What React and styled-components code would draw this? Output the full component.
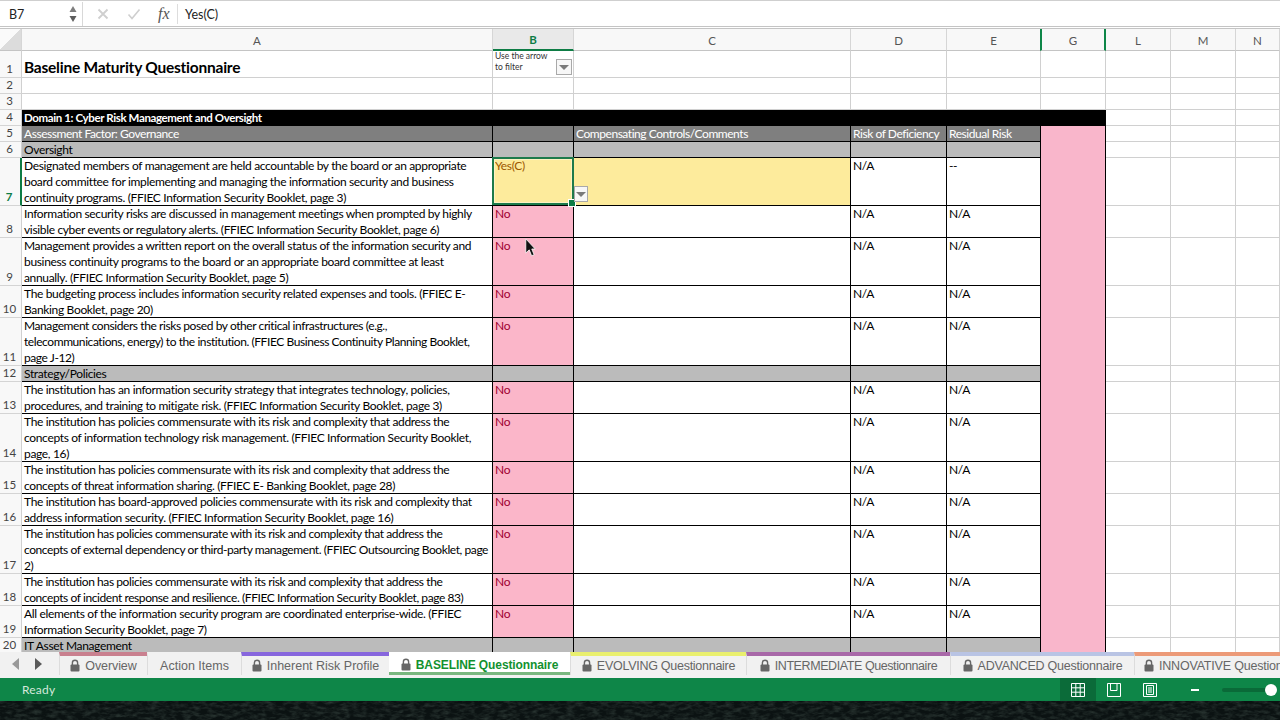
import React from 'react'
import styled, { createGlobalStyle } from 'styled-components'

const GlobalStyle = createGlobalStyle`
  html, body { margin: 0; padding: 0; background: #fff; }
  body { width: 1280px; height: 720px; overflow: hidden; font-family: Lato, "Liberation Sans", sans-serif; }
`
const Page = styled.div`
  width: 1280px;
  height: 720px;
  display: flex;
  flex-direction: column;
  overflow: hidden;
`
const FormulaBar = styled.div`
  height: 25px;
  flex: none;
  display: flex;
  align-items: center;
  border-top: 1px solid #cfcfcf;
  border-bottom: 3px double #c4c4c4;
  background: #fff;
  color: #222;
  font-size: 12.5px;
`
const NameBox = styled.div`
  width: 83px;
  height: 24px;
  box-sizing: border-box;
  padding: 1px 5px 0 9px;
  flex: none;
  display: flex;
  align-items: center;
  justify-content: space-between;
  border-right: 1px solid #d8d8d8;
`
const FormulaIcons = styled.div`
  width: 95px;
  height: 20px;
  flex: none;
  display: flex;
  align-items: center;
  padding-left: 14px;
  gap: 18px;
  box-sizing: border-box;
  border-right: 1px solid #ddd;
`
const Fx = styled.span`
  font-family: "Liberation Serif", serif;
  font-style: italic;
  font-size: 16px;
  color: #555;
  margin-left: -1px;
`
const FormulaText = styled.div`
  margin: 2px 0 0 7px;
`
const Sheet = styled.div`
  height: 623px;
  flex: none;
  display: grid;
  grid-template-columns: 22px 471px 81px 277px 96px 94px 65px 65px 65px 44px;
  grid-template-rows: 22px 27px 16px 16px 16px 16px 16px 48px 32px 48px 32px 48px 16px 32px 48px 32px 32px 48px 32px 32px 16px;
  overflow: hidden;
  background: #fff;
  font-size: 12px;
  line-height: 16px;
  letter-spacing: -0.34px;
  color: #000;
`
const Corner = styled.div`
  background: linear-gradient(135deg, #fafafa 50%, #dcdcdc 50%);
  border-right: 1px solid #d6d6d6;
  border-bottom: 1px solid #c4c4c4;
`
const ColHead = styled.div`
  display: flex;
  align-items: center;
  justify-content: center;
  box-sizing: border-box;
  padding-top: 2px;
  letter-spacing: 0;
  font-size: 11.5px;
  color: ${p => (p.$active ? '#0e7c45' : '#555')};
  font-weight: ${p => (p.$active ? 700 : 400)};
  background: ${p => (p.$active ? '#e9e9e9' : '#f8f8f8')};
  border-right: 1px solid #d6d6d6;
  border-bottom: ${p => (p.$active ? '2px solid #0e7c45' : '1px solid #c4c4c4')};
  ${p => p.$marked && 'border-left: 2px solid #0e8648; border-right: 2px solid #0e8648; margin-left: -1px;'}
`
const RowHead = styled.div`
  display: flex;
  align-items: flex-end;
  justify-content: center;
  box-sizing: border-box;
  padding-right: 2px;
  background: #f8f8f8;
  border-right: ${p => (p.$active ? '2px solid #0e7c45' : '1px solid #d0d0d0')};
  border-bottom: 1px solid #d4d4d4;
  font-size: 11.5px;
  letter-spacing: 0;
  color: ${p => (p.$active ? '#0e7c45' : '#444')};
  font-weight: ${p => (p.$active ? 700 : 400)};
`
const cellFills = {
  dark: '#7f7f7f',
  grey: '#bbbbbb',
  yellow: '#fdeb9c',
  pink: '#fbb6c9',
  white: '#fff',
}
const Cell = styled.div`
  position: relative;
  box-sizing: border-box;
  padding-left: 2px;
  white-space: pre;
  background: ${p => cellFills[p.$fill || 'white']};
  color: ${p => p.$color || '#000'};
  border-right: 1px solid ${p => (p.$lined ? '#000' : '#d0d0d0')};
  border-bottom: 1px solid ${p => (p.$lined ? '#000' : '#d0d0d0')};
  ${p => p.$tight && 'letter-spacing: -0.42px;'}
`
const HeaderCell = styled(Cell)`
  letter-spacing: -0.45px;
`
const Title = styled(Cell)`
  display: flex;
  align-items: center;
  padding-top: 6px;
  font-size: 15.5px;
  font-weight: 700;
  letter-spacing: -0.23px;
`
const BlackBand = styled(Cell)`
  grid-column: span 6;
  font-size: 11.5px;
  font-weight: 700;
  letter-spacing: -0.38px;
  color: #fff;
  background: #000;
  border-color: #000;
`
const NoteCell = styled(Cell)`
  font-size: 8.5px;
  line-height: 11px;
  letter-spacing: 0;
  color: #333;
`
const PinkColumn = styled.div`
  grid-column: 7;
  grid-row: 6 / span 16;
  background: #f9b6cb;
  border-right: 1px solid #000;
  box-sizing: border-box;
`
const FilterButton = styled.div`
  position: absolute;
  right: ${p => p.$right}px;
  bottom: ${p => p.$bottom}px;
  width: ${p => p.$width}px;
  height: 16px;
  box-sizing: border-box;
  display: flex;
  align-items: center;
  justify-content: center;
  background: #f7f7f7;
  border: 1px solid #a9a9a9;
  z-index: 3;
  &::after {
    content: '';
    border-left: 5px solid transparent;
    border-right: 5px solid transparent;
    border-top: 5px solid #7a7a7a;
  }
`
const Selection = styled.div`
  position: absolute;
  inset: -1px -1px 0 -1px;
  border: 2px solid #1d7a4b;
  box-shadow: inset 0 0 0 1px #fdf3c4;
  z-index: 2;
  &::after {
    content: '';
    position: absolute;
    right: -4px;
    bottom: -4px;
    width: 6px;
    height: 6px;
    background: #0e7c45;
    border: 1px solid #fff;
  }
`
const Cursor = styled.svg`
  position: absolute;
  left: 32px;
  top: 0;
  z-index: 4;
`
const TabBar = styled.div`
  height: 26px;
  flex: none;
  display: flex;
  background: #f1f1f1;
  overflow: hidden;
  font-family: "Liberation Sans", Arial, sans-serif;
  font-size: 12.5px;
  color: #666;
`
const TabArrows = styled.div`
  width: 59px;
  flex: none;
  display: flex;
  align-items: center;
  padding: 0 0 3px 12px;
  gap: 16px;
  box-sizing: border-box;
`
const Arrow = styled.div`
  width: 0;
  height: 0;
  border-top: 6px solid transparent;
  border-bottom: 6px solid transparent;
  ${p => (p.$left ? 'border-right: 7px solid #999;' : 'border-left: 7px solid #5a5a5a;')}
`
const Tab = styled.div`
  width: ${p => p.$width}px;
  height: 23px;
  flex: none;
  box-sizing: border-box;
  display: flex;
  align-items: center;
  justify-content: center;
  gap: 5px;
  white-space: nowrap;
  letter-spacing: ${p => p.$spacing || 0}px;
  border-top: 4px solid ${p => p.$bar || 'transparent'};
  border-left: 1px solid #dcdcdc;
  ${p => p.$active && `
    background: #fff;
    color: #12912f;
    font-size: 12px;
    font-weight: 700;
    border-left: none;
    box-shadow: inset 0 -3px 0 #79b77f;
    border-top-color: #fff;
    padding-bottom: 2px;
  `}
  ${p => p.$clip && 'justify-content: flex-start; padding-left: 9px;'}
`
const LockSvg = styled.svg`
  flex: none;
`
const StatusBar = styled.div`
  height: 23px;
  flex: none;
  display: flex;
  align-items: center;
  background: #0e8648;
  color: #d4e8db;
  font-size: 12px;
  padding-left: 22px;
  letter-spacing: 0.2px;
`
const ViewGroup = styled.div`
  margin-left: auto;
  display: flex;
  align-items: stretch;
  height: 100%;
`
const ViewButton = styled.div`
  width: 36px;
  display: flex;
  align-items: center;
  justify-content: center;
  background: ${p => (p.$active ? '#0b6b39' : 'transparent')};
`
const Zoom = styled.div`
  width: 112px;
  flex: none;
  display: flex;
  align-items: center;
  padding-left: 23px;
  box-sizing: border-box;
`
const Minus = styled.div`
  width: 8px;
  height: 2px;
  flex: none;
  background: #fff;
`
const Track = styled.div`
  position: relative;
  width: 48px;
  height: 4px;
  flex: none;
  margin-left: 23px;
  background: #0a6a38;
  border-radius: 2px;
`
const Thumb = styled.div`
  position: absolute;
  right: -7px;
  top: -4px;
  width: 12px;
  height: 12px;
  border-radius: 50%;
  background: #fff;
`
const Wallpaper = styled.svg`
  display: block;
  flex: 1;
  width: 1280px;
  background: #0b1212;
`

const LockIcon = ({ color = '#666' }) => (
  <LockSvg width="10" height="13" viewBox="0 0 10 13">
    <path d="M2.4 6V3.8a2.6 2.6 0 0 1 5.2 0V6" fill="none" stroke={color} strokeWidth="1.4" />
    <rect x="0.5" y="5.5" width="9" height="7" rx="1" fill={color} />
  </LockSvg>
)

const columns = ['A', 'B', 'C', 'D', 'E', 'G', 'L', 'M', 'N']
const tightRows = [11, 17, 18]

const questions = [
  [7, 'Designated members of management are held accountable by the board or an appropriate\nboard committee for implementing and managing the information security and business\ncontinuity programs. (FFIEC Information Security Booklet, page 3)'],
  [8, 'Information security risks are discussed in management meetings when prompted by highly\nvisible cyber events or regulatory alerts. (FFIEC Information Security Booklet, page 6)'],
  [9, 'Management provides a written report on the overall status of the information security and\nbusiness continuity programs to the board or an appropriate board committee at least\nannually. (FFIEC Information Security Booklet, page 5)'],
  [10, 'The budgeting process includes information security related expenses and tools. (FFIEC E-\nBanking Booklet, page 20)'],
  [11, 'Management considers the risks posed by other critical infrastructures (e.g.,\ntelecommunications, energy) to the institution. (FFIEC Business Continuity Planning Booklet,\npage J-12)'],
  [12, 'Strategy/Policies', 'section'],
  [13, 'The institution has an information security strategy that integrates technology, policies,\nprocedures, and training to mitigate risk. (FFIEC Information Security Booklet, page 3)'],
  [14, 'The institution has policies commensurate with its risk and complexity that address the\nconcepts of information technology risk management. (FFIEC Information Security Booklet,\npage, 16)'],
  [15, 'The institution has policies commensurate with its risk and complexity that address the\nconcepts of threat information sharing. (FFIEC E- Banking Booklet, page 28)'],
  [16, 'The institution has board-approved policies commensurate with its risk and complexity that\naddress information security. (FFIEC Information Security Booklet, page 16)'],
  [17, 'The institution has policies commensurate with its risk and complexity that address the\nconcepts of external dependency or third-party management. (FFIEC Outsourcing Booklet, page\n2)'],
  [18, 'The institution has policies commensurate with its risk and complexity that address the\nconcepts of incident response and resilience. (FFIEC Information Security Booklet, page 83)'],
  [19, 'All elements of the information security program are coordinated enterprise-wide. (FFIEC\nInformation Security Booklet, page 7)'],
  [20, 'IT Asset Management', 'section'],
]

const tabs = [
  { name: 'Overview', width: 88, bar: '#c9808f', lock: true, spacing: -0.1 },
  { name: 'Action Items', width: 94 },
  { name: 'Inherent Risk Profile', width: 148, bar: '#8766dd', lock: true },
  { name: 'BASELINE Questionnaire', width: 181, active: true, lock: true, spacing: -0.1 },
  { name: 'EVOLVING Questionnaire', width: 176, bar: '#e9ef6e', lock: true, spacing: -0.27 },
  { name: 'INTERMEDIATE Questionnaire', width: 204, bar: '#a868a8', lock: true, spacing: -0.42 },
  { name: 'ADVANCED Questionnaire', width: 184, bar: '#b9c4e4', lock: true, spacing: -0.23 },
  { name: 'INNOVATIVE Questionnaire', width: 146, bar: '#ec9a78', lock: true, clip: true, spacing: -0.2 },
]

const SpareCells = () => (
  <>
    <Cell />
    <Cell />
    <Cell />
  </>
)

const QuestionRow = ({ row, text, kind }) => {
  if (kind === 'section') {
    return (
      <>
        <RowHead>{row}</RowHead>
        <Cell $fill="grey" $lined>{text}</Cell>
        <Cell $fill="grey" $lined />
        <Cell $fill="grey" $lined />
        <Cell $fill="grey" $lined />
        <Cell $fill="grey" $lined />
        <SpareCells />
      </>
    )
  }
  const selected = row === 7
  return (
    <>
      <RowHead $active={selected}>{row}</RowHead>
      <Cell $lined $tight={tightRows.includes(row)}>{text}</Cell>
      <Cell $lined $fill={selected ? 'yellow' : 'pink'} $color={selected ? '#9c5700' : '#a00030'}>
        {selected ? 'Yes(C)' : 'No'}
        {selected && <Selection />}
        {selected && <FilterButton $right={-15} $width={14} $bottom={3} />}
        {row === 9 && (
          <Cursor width="11" height="19" viewBox="0 0 14 24">
            <path d="M1 1v18l4.4-4 3 7.5 3.2-1.3-3-7.3H13z" fill="#111" stroke="#fff" strokeWidth="1" />
          </Cursor>
        )}
      </Cell>
      <Cell $lined $fill={selected ? 'yellow' : 'white'} />
      <Cell $lined>N/A</Cell>
      <Cell $lined>{selected ? '--' : 'N/A'}</Cell>
      <SpareCells />
    </>
  )
}

const App = () => (
  <Page>
    <GlobalStyle />
    <FormulaBar>
      <NameBox>
        B7
        <svg width="8" height="20" viewBox="0 0 8 20">
          <path d="M4 2l3.5 6h-7z" fill="#7d7d7d" />
          <path d="M4 18l3.5-6h-7z" fill="#5d5d5d" />
        </svg>
      </NameBox>
      <FormulaIcons>
        <svg width="12" height="12" viewBox="0 0 12 12">
          <path d="M1.5 1.5l9 9M10.5 1.5l-9 9" stroke="#cfcfcf" strokeWidth="1.8" />
        </svg>
        <svg width="14" height="12" viewBox="0 0 14 12">
          <path d="M1.5 6.5l3.5 4 7.5-9" fill="none" stroke="#cfcfcf" strokeWidth="1.6" />
        </svg>
        <Fx>fx</Fx>
      </FormulaIcons>
      <FormulaText>Yes(C)</FormulaText>
    </FormulaBar>
    <Sheet>
      <Corner />
      {columns.map(c => (
        <ColHead key={c} $active={c === 'B'} $marked={c === 'G'}>{c}</ColHead>
      ))}

      <RowHead>1</RowHead>
      <Title>Baseline Maturity Questionnaire</Title>
      <NoteCell>
        {'Use the arrow\nto filter'}
        <FilterButton $right={1} $width={16} $bottom={2} />
      </NoteCell>
      <Cell /><Cell /><Cell /><Cell /><SpareCells />

      <RowHead>2</RowHead>
      <Cell /><Cell /><Cell /><Cell /><Cell /><Cell /><SpareCells />
      <RowHead>3</RowHead>
      <Cell /><Cell /><Cell /><Cell /><Cell /><Cell /><SpareCells />

      <RowHead>4</RowHead>
      <BlackBand>Domain 1: Cyber Risk Management and Oversight</BlackBand>
      <SpareCells />

      <RowHead>5</RowHead>
      <HeaderCell $fill="dark" $lined $color="#fff">Assessment Factor: Governance</HeaderCell>
      <Cell $fill="dark" $lined />
      <HeaderCell $fill="dark" $lined $color="#fff">Compensating Controls/Comments</HeaderCell>
      <HeaderCell $fill="dark" $lined $color="#fff">Risk of Deficiency</HeaderCell>
      <HeaderCell $fill="dark" $lined $color="#fff">Residual Risk</HeaderCell>
      <PinkColumn />
      <SpareCells />

      <QuestionRow row={6} text="Oversight" kind="section" />
      {questions.map(([row, text, kind]) => (
        <QuestionRow key={row} row={row} text={text} kind={kind} />
      ))}
    </Sheet>
    <TabBar>
      <TabArrows>
        <Arrow $left />
        <Arrow />
      </TabArrows>
      {tabs.map(t => (
        <Tab key={t.name} $width={t.width} $bar={t.bar} $active={t.active} $clip={t.clip} $spacing={t.spacing}>
          {t.lock && <LockIcon />}
          {t.name}
        </Tab>
      ))}
    </TabBar>
    <StatusBar>
      Ready
      <ViewGroup>
        <ViewButton $active>
          <svg width="14" height="14" viewBox="0 0 14 14" fill="none" stroke="#fff">
            <path d="M.5.5h13v13H.5zM.5 4.8h13M.5 9.2h13M4.800.5v13M9.200.5v13" />
          </svg>
        </ViewButton>
        <ViewButton>
          <svg width="14" height="14" viewBox="0 0 14 14" fill="none" stroke="#fff">
            <path d="M.5.5h13v13H.5zM3.500.5v7h6.500v-7" />
          </svg>
        </ViewButton>
        <ViewButton>
          <svg width="14" height="14" viewBox="0 0 14 14" fill="none" stroke="#fff">
            <path d="M.5.5h13v13H.5zM3.500 2.500h7v9h-7zM5 5h4M5 7h4M5 9h4" />
          </svg>
        </ViewButton>
      </ViewGroup>
      <Zoom>
        <Minus />
        <Track><Thumb /></Track>
      </Zoom>
    </StatusBar>
    <Wallpaper viewBox="0 0 1280 19" preserveAspectRatio="none">
      <filter id="foliage">
        <feTurbulence type="fractalNoise" baseFrequency="0.12 0.3" numOctaves="3" seed="4" />
        <feColorMatrix values="0 0 0 0 0.12  0 0 0 0 0.18  0 0 0 0 0.15  0.7 0 0 0 -0.27" />
      </filter>
      <rect width="1280" height="19" filter="url(#foliage)" />
    </Wallpaper>
  </Page>
)

export default App
